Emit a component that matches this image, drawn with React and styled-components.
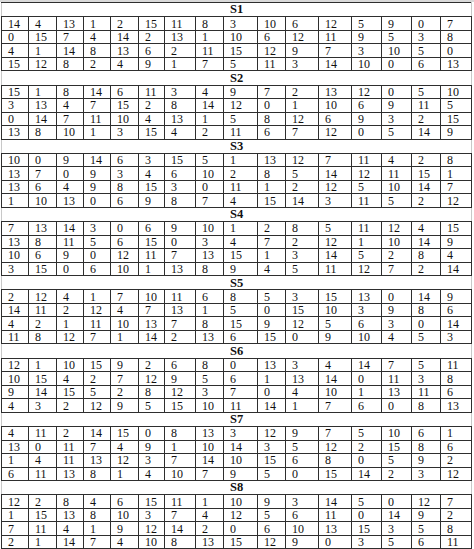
import styled, { createGlobalStyle } from 'styled-components';

const GlobalStyle = createGlobalStyle`
  html, body {
    margin: 0;
    padding: 0;
    background: #fff;
  }
`;

const SBOXES = [
  [
    [14, 4, 13, 1, 2, 15, 11, 8, 3, 10, 6, 12, 5, 9, 0, 7],
    [0, 15, 7, 4, 14, 2, 13, 1, 10, 6, 12, 11, 9, 5, 3, 8],
    [4, 1, 14, 8, 13, 6, 2, 11, 15, 12, 9, 7, 3, 10, 5, 0],
    [15, 12, 8, 2, 4, 9, 1, 7, 5, 11, 3, 14, 10, 0, 6, 13],
  ],
  [
    [15, 1, 8, 14, 6, 11, 3, 4, 9, 7, 2, 13, 12, 0, 5, 10],
    [3, 13, 4, 7, 15, 2, 8, 14, 12, 0, 1, 10, 6, 9, 11, 5],
    [0, 14, 7, 11, 10, 4, 13, 1, 5, 8, 12, 6, 9, 3, 2, 15],
    [13, 8, 10, 1, 3, 15, 4, 2, 11, 6, 7, 12, 0, 5, 14, 9],
  ],
  [
    [10, 0, 9, 14, 6, 3, 15, 5, 1, 13, 12, 7, 11, 4, 2, 8],
    [13, 7, 0, 9, 3, 4, 6, 10, 2, 8, 5, 14, 12, 11, 15, 1],
    [13, 6, 4, 9, 8, 15, 3, 0, 11, 1, 2, 12, 5, 10, 14, 7],
    [1, 10, 13, 0, 6, 9, 8, 7, 4, 15, 14, 3, 11, 5, 2, 12],
  ],
  [
    [7, 13, 14, 3, 0, 6, 9, 10, 1, 2, 8, 5, 11, 12, 4, 15],
    [13, 8, 11, 5, 6, 15, 0, 3, 4, 7, 2, 12, 1, 10, 14, 9],
    [10, 6, 9, 0, 12, 11, 7, 13, 15, 1, 3, 14, 5, 2, 8, 4],
    [3, 15, 0, 6, 10, 1, 13, 8, 9, 4, 5, 11, 12, 7, 2, 14],
  ],
  [
    [2, 12, 4, 1, 7, 10, 11, 6, 8, 5, 3, 15, 13, 0, 14, 9],
    [14, 11, 2, 12, 4, 7, 13, 1, 5, 0, 15, 10, 3, 9, 8, 6],
    [4, 2, 1, 11, 10, 13, 7, 8, 15, 9, 12, 5, 6, 3, 0, 14],
    [11, 8, 12, 7, 1, 14, 2, 13, 6, 15, 0, 9, 10, 4, 5, 3],
  ],
  [
    [12, 1, 10, 15, 9, 2, 6, 8, 0, 13, 3, 4, 14, 7, 5, 11],
    [10, 15, 4, 2, 7, 12, 9, 5, 6, 1, 13, 14, 0, 11, 3, 8],
    [9, 14, 15, 5, 2, 8, 12, 3, 7, 0, 4, 10, 1, 13, 11, 6],
    [4, 3, 2, 12, 9, 5, 15, 10, 11, 14, 1, 7, 6, 0, 8, 13],
  ],
  [
    [4, 11, 2, 14, 15, 0, 8, 13, 3, 12, 9, 7, 5, 10, 6, 1],
    [13, 0, 11, 7, 4, 9, 1, 10, 14, 3, 5, 12, 2, 15, 8, 6],
    [1, 4, 11, 13, 12, 3, 7, 14, 10, 15, 6, 8, 0, 5, 9, 2],
    [6, 11, 13, 8, 1, 4, 10, 7, 9, 5, 0, 15, 14, 2, 3, 12],
  ],
  [
    [12, 2, 8, 4, 6, 15, 11, 1, 10, 9, 3, 14, 5, 0, 12, 7],
    [1, 15, 13, 8, 10, 3, 7, 4, 12, 5, 6, 11, 0, 14, 9, 2],
    [7, 11, 4, 1, 9, 12, 14, 2, 0, 6, 10, 13, 15, 3, 5, 8],
    [2, 1, 14, 7, 4, 10, 8, 13, 15, 12, 9, 0, 3, 5, 6, 11],
  ],
];

// column widths read off the scanned table (auto layout in the original)
const COLS = [27, 28, 27, 27, 28, 26, 31, 28, 34, 28, 33, 33, 30, 30, 29, 31];

const Page = styled.div`
  border-top: 2px solid #d9d9d9;
  font-family: "Liberation Serif", "Times New Roman", serif;
  color: #111;
`;

const Table = styled.table`
  border-collapse: collapse;
  table-layout: fixed;
  width: 471px;
  margin-left: 1px;
  font-size: 12px;
  line-height: 1;
`;

const TitleRow = styled.tr`
  height: 14.3px;
`;

const TitleCell = styled.th`
  border: 1px solid #2e2e2e;
  border-left-color: #c8c8c8;
  border-right-color: #c8c8c8;
  padding: 0;
  text-align: center;
  vertical-align: middle;
  font-weight: bold;
  font-size: 12.5px;
  background: #fff;
`;

const DataRow = styled.tr`
  height: 13.5px;
`;

const Cell = styled.td`
  border: 1px solid #2e2e2e;
  padding: 0 0 0 6px;
  text-align: left;
  vertical-align: middle;
  white-space: nowrap;
`;

export default function App() {
  return (
    <Page>
      <GlobalStyle />
      <Table>
        <colgroup>
          {COLS.map((w, i) => (
            <col key={i} style={{ width: w }} />
          ))}
        </colgroup>
        <tbody>
          {SBOXES.map((box, b) => [
            <TitleRow key={`t${b}`}>
              <TitleCell colSpan={16}>S{b + 1}</TitleCell>
            </TitleRow>,
            ...box.map((row, r) => (
              <DataRow key={`r${b}-${r}`}>
                {row.map((v, c) => (
                  <Cell key={c}>{v}</Cell>
                ))}
              </DataRow>
            )),
          ])}
        </tbody>
      </Table>
    </Page>
  );
}
